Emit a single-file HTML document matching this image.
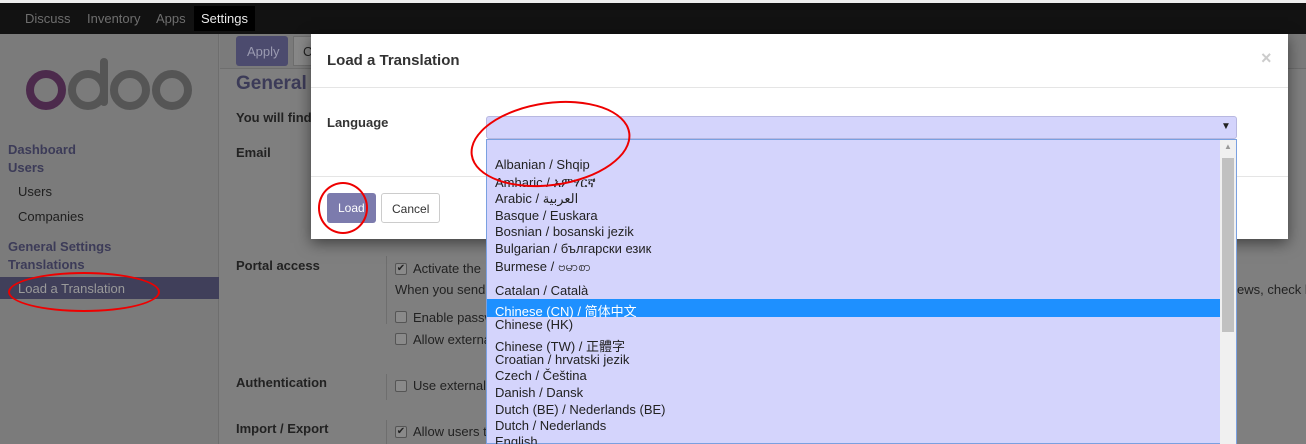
<!DOCTYPE html>
<html><head><meta charset="utf-8"><style>
*{margin:0;padding:0;box-sizing:border-box}
html,body{width:1306px;height:444px;overflow:hidden}
body{position:relative;background:#7f7f7f;font-family:"Liberation Sans","Noto Sans CJK SC",sans-serif;font-size:13px;color:#222}
.a{position:absolute;white-space:nowrap}
.nav{left:0;top:0;width:1306px;height:34px;background:#121212;border-top:3px solid #eee}
.nav span{position:absolute;top:8px;font-size:13px;color:#6e6e6e}
.side{left:0;top:34px;width:219px;height:410px;background:#7b7b7b;border-right:1px solid #6e6e6e}
.sh{color:#3c3b58;font-weight:bold;font-size:13px}
.g{color:#1e1e1e}
.cb{width:12px;height:12px;border:1px solid #555;background:#8a8a8a;border-radius:2px;font-size:10px;line-height:10px;text-align:center;color:#222}
.modal{left:311px;top:34px;width:977px;height:205px;background:#fff;box-shadow:0 4px 14px rgba(0,0,0,.5)}
.li{position:absolute;left:8px;font-size:13px;color:#222}
.ell{position:absolute;border:2.5px solid #e00;border-radius:50%}
</style></head><body>
<div class="a nav"><span style="left:25px">Discuss</span><span style="left:87px">Inventory</span><span style="left:156px">Apps</span><span style="left:194px;top:3px;background:#000;color:#e8e8e8;padding:5px 7px;height:25px">Settings</span></div>
<div class="a side">
<svg class="a" style="left:0;top:0" width="219" height="100" viewBox="0 0 219 100"><circle cx="46" cy="56" r="16" fill="none" stroke="#4c2a4c" stroke-width="8"/><circle cx="88" cy="56" r="16" fill="none" stroke="#555" stroke-width="8"/><rect x="100" y="24" width="8" height="48" rx="4" fill="#555"/><circle cx="130" cy="56" r="16" fill="none" stroke="#555" stroke-width="8"/><circle cx="172" cy="56" r="16" fill="none" stroke="#555" stroke-width="8"/></svg>
<div class="a sh" style="left:8px;top:108px">Dashboard</div>
<div class="a sh" style="left:8px;top:126px">Users</div>
<div class="a g" style="left:18px;top:150px">Users</div>
<div class="a g" style="left:18px;top:175px">Companies</div>
<div class="a sh" style="left:8px;top:205px">General Settings</div>
<div class="a sh" style="left:8px;top:223px">Translations</div>
<div class="a" style="left:0;top:243px;width:219px;height:22px;background:#403f5a"></div>
<div class="a" style="left:18px;top:247px;color:#9a9a9a">Load a Translation</div>
</div>
<div class="a" style="left:220px;top:34px;width:1086px;height:35px;border-bottom:1px solid #6e6e6e;background:#7b7b7b"></div>
<div class="a" style="left:236px;top:36px;width:52px;height:30px;background:#4c4b6e;border-radius:3px;color:#9a9ab0;padding:8px 0 0 11px">Apply</div>
<div class="a" style="left:293px;top:36px;width:30px;height:30px;background:#888;border:1px solid #6e6e6e;color:#222;padding:7px 0 0 9px">C</div>
<div class="a" style="left:236px;top:73px;font-size:19px;font-weight:bold;color:#3c3b58">General</div>
<div class="a" style="left:236px;top:110px;font-weight:bold">You will find</div>
<div class="a" style="left:236px;top:145px;font-weight:bold">Email</div>
<div class="a" style="left:236px;top:258px;font-weight:bold">Portal access</div>
<div class="a" style="left:236px;top:375px;font-weight:bold">Authentication</div>
<div class="a" style="left:236px;top:421px;font-weight:bold">Import / Export</div>
<div class="a" style="left:386px;top:256px;width:1px;height:68px;background:#6e6e6e"></div>
<div class="a" style="left:386px;top:374px;width:1px;height:26px;background:#6e6e6e"></div>
<div class="a" style="left:386px;top:420px;width:1px;height:24px;background:#6e6e6e"></div>
<div class="a cb" style="left:395px;top:263px">✔</div><div class="a" style="left:413px;top:261px">Activate the</div>
<div class="a" style="left:395px;top:282px">When you send</div>
<div class="a cb" style="left:395px;top:311px"></div><div class="a" style="left:413px;top:310px">Enable passw</div>
<div class="a cb" style="left:395px;top:333px"></div><div class="a" style="left:413px;top:332px">Allow externa</div>
<div class="a cb" style="left:395px;top:380px"></div><div class="a" style="left:413px;top:378px">Use external</div>
<div class="a cb" style="left:395px;top:426px">✔</div><div class="a" style="left:413px;top:424px">Allow users t</div>
<div class="a" style="left:1237px;top:282px">ews, check l</div>
<div class="a modal">
<div class="a" style="left:16px;top:18px;font-size:15px;font-weight:bold;color:#333">Load a Translation</div>
<div class="a" style="left:950px;top:14px;font-size:18px;color:#ccc;font-weight:bold">×</div>
<div class="a" style="left:0;top:53px;width:977px;height:1px;background:#e5e5e5"></div>
<div class="a" style="left:16px;top:81px;font-weight:bold;color:#333">Language</div>
<div class="a" style="left:0;top:142px;width:977px;height:1px;background:#e5e5e5"></div>
<div class="a" style="left:16px;top:159px;width:49px;height:30px;background:#7c7bad;border-radius:3px;color:#fff;font-size:12px;padding:8px 0 0 11px">Load</div>
<div class="a" style="left:70px;top:159px;width:59px;height:30px;border:1px solid #ccc;border-radius:3px;color:#333;font-size:12px;padding:8px 0 0 10px">Cancel</div>
</div>
<div class="a" style="left:486px;top:116px;width:751px;height:23px;background:#d4d4fc;border:1px solid #b8b8e0;border-radius:3px"></div>
<div class="a" style="left:1221px;top:121px;font-size:10px">▼</div>
<div class="a" style="left:486px;top:139px;width:751px;height:305px;background:#d4d4fc;border:1px solid #7aa0e0">
<div class="a" style="left:0;top:159px;width:733px;height:18px;background:#1e90ff"></div>
<div class="a" style="left:733px;top:0;width:16px;height:305px;background:#f0f0f0"></div>
<div class="a" style="left:735px;top:18px;width:12px;height:174px;background:#c1c1c1"></div>
<div class="a" style="left:737px;top:2px;font-size:8px;color:#999">▲</div>
<div class="li" style="top:17px">Albanian / Shqip</div>
<div class="li" style="top:35px">Amharic / አምሃርኛ</div>
<div class="li" style="top:51px">Arabic / العربية</div>
<div class="li" style="top:68px">Basque / Euskara</div>
<div class="li" style="top:84px">Bosnian / bosanski jezik</div>
<div class="li" style="top:101px">Bulgarian / български език</div>
<div class="li" style="top:119px">Burmese / ဗမာစာ</div>
<div class="li" style="top:143px">Catalan / Català</div>
<div class="li" style="top:161px;color:#fff">Chinese (CN) / 简体中文</div>
<div class="li" style="top:177px">Chinese (HK)</div>
<div class="li" style="top:196px">Chinese (TW) / 正體字</div>
<div class="li" style="top:212px">Croatian / hrvatski jezik</div>
<div class="li" style="top:228px">Czech / Čeština</div>
<div class="li" style="top:245px">Danish / Dansk</div>
<div class="li" style="top:262px">Dutch (BE) / Nederlands (BE)</div>
<div class="li" style="top:278px">Dutch / Nederlands</div>
<div class="li" style="top:294px">English</div>
</div>
<div class="ell" style="left:470px;top:102px;width:161px;height:84px;transform:rotate(-8deg)"></div>
<div class="ell" style="left:318px;top:182px;width:50px;height:52px"></div>
<div class="ell" style="left:8px;top:272px;width:152px;height:40px"></div>
</body></html>
